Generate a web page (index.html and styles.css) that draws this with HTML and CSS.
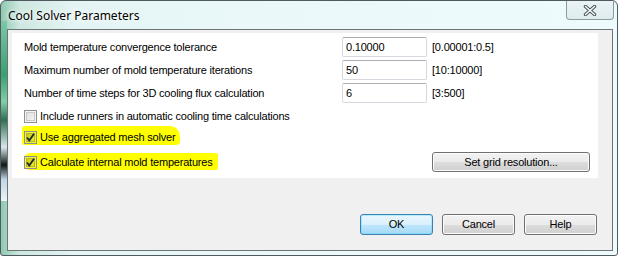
FILE: index.html
```html
<!DOCTYPE html>
<html>
<head>
<meta charset="utf-8">
<link rel="stylesheet" href="styles.css">
</head>
<body>
<div class="window">
  <div class="titlebar">
    <span class="title">Cool Solver Parameters</span>
    <div class="close">
      <svg width="14" height="11" viewBox="0 0 14 11">
        <path d="M2.5 1.5 L11.5 9.5 M11.5 1.5 L2.5 9.5" stroke="#4a5560" stroke-width="3.4" stroke-linecap="round" fill="none"/>
        <path d="M2.5 1.5 L11.5 9.5 M11.5 1.5 L2.5 9.5" stroke="#ffffff" stroke-width="1.4" stroke-linecap="round" fill="none"/>
      </svg>
    </div>
  </div>
  <div class="client">
    <div class="panel">
      <div class="params">
        <span class="lbl">Mold temperature convergence tolerance</span>
        <div class="field">0.10000</div>
        <span class="range">[0.00001:0.5]</span>
        <span class="lbl">Maximum number of mold temperature iterations</span>
        <div class="field">50</div>
        <span class="range">[10:10000]</span>
        <span class="lbl">Number of time steps for 3D cooling flux calculation</span>
        <div class="field">6</div>
        <span class="range">[3:500]</span>
      </div>
      <div class="check-row row1">
        <span class="box"></span>
        <span class="clabel">Include runners in automatic cooling time calculations</span>
      </div>
      <div class="check-row row2">
        <span class="hl hl2"></span>
        <span class="box checked">
          <svg width="11" height="11" viewBox="0 0 11 11"><path d="M2 5.5 L4.3 8.5 L9 1.8" stroke="#1e2a3a" stroke-width="1.9" fill="none"/></svg>
        </span>
        <span class="clabel">Use aggregated mesh solver</span>
      </div>
      <div class="check-row row3">
        <span class="hl hl3"></span>
        <span class="box checked">
          <svg width="11" height="11" viewBox="0 0 11 11"><path d="M2 5.5 L4.3 8.5 L9 1.8" stroke="#1e2a3a" stroke-width="1.9" fill="none"/></svg>
        </span>
        <span class="clabel">Calculate internal mold temperatures</span>
        <div class="btn grid-btn">Set grid resolution...</div>
      </div>
    </div>
    <div class="buttons">
      <div class="btn default">OK</div>
      <div class="btn">Cancel</div>
      <div class="btn">Help</div>
    </div>
  </div>
</div>
</body>
</html>
```

FILE: styles.css
```css
html, body {
  margin: 0;
  padding: 0;
  background: #ffffff;
}
body {
  width: 619px;
  height: 257px;
  overflow: hidden;
  font-family: "Liberation Sans", Arial, sans-serif;
  font-size: 11px;
  letter-spacing: -0.2px;
  color: #000;
}
.window {
  width: 616px;
  height: 254px;
  border: 1px solid #4f5a60;
  border-radius: 6px 6px 3px 3px;
  background: linear-gradient(to right, #8fc8b0 0, #cde8e0 3%, #e4f4f4 12%, #eaf8fa 40%, #eefbfc 100%);
  position: relative;
  overflow: hidden;
}
.window::before {
  content: "";
  position: absolute;
  left: 0;
  top: 20px;
  width: 6px;
  height: 180px;
  background: linear-gradient(to bottom, #7cc7a8 0, #3aa070 30%, #7fd0a8 45%, #2f6f50 55%, #d8e8ec 70%, #101818 80%, #c0d4e4 88%, #eaf6f8 100%);
}
.titlebar {
  height: 28px;
  display: flex;
  align-items: flex-start;
  justify-content: space-between;
}
.title {
  font-family: "Noto Sans", "Liberation Sans", sans-serif;
  font-size: 12px;
  letter-spacing: 0;
  line-height: 16px;
  margin: 7px 0 0 7px;
  color: #000;
  text-shadow: 0 0 6px #ffffff, 0 0 3px #ffffff;
}
.close {
  width: 46px;
  height: 18px;
  margin-right: 3px;
  border: 1px solid #8c9ba2;
  border-top: none;
  border-radius: 0 0 4px 4px;
  background: linear-gradient(to bottom, #e9f3f5, #dfecef);
  display: flex;
  align-items: center;
  justify-content: center;
}
.close svg { display: block; }
.client {
  margin-left: 6px;
  width: 604px;
  height: 220px;
  border: 1px solid #6d7376;
  background: #f0f0f0;
  display: flex;
  flex-direction: column;
}
.panel {
  margin: 3px 0 0 4px;
  width: 586px;
  height: 145px;
  background: #ffffff;
  box-sizing: border-box;
  padding: 4px 0 0 12px;
  display: flex;
  flex-direction: column;
}
.params {
  display: grid;
  grid-template-columns: 318px 85px auto;
  grid-auto-rows: 20px;
  row-gap: 3px;
  align-items: center;
}
.range { margin-left: 5px; }
.lbl, .range, .clabel {
  line-height: 13px;
  white-space: nowrap;
}
.field {
  height: 20px;
  box-sizing: border-box;
  border: 1px solid #d6d8df;
  border-top-color: #abadb3;
  border-radius: 2px;
  padding: 0 3px;
  line-height: 18px;
  background: #fff;
}
.check-row {
  display: flex;
  align-items: center;
  height: 20px;
  position: relative;
}
.row1 { margin-top: 3px; }
.row2 { margin-top: 1px; }
.row3 { margin-top: 5px; }
.box {
  width: 13px;
  height: 13px;
  box-sizing: border-box;
  border: 1px solid #8e8f8f;
  background: linear-gradient(135deg, #dcdcdc, #f8f8f8);
  box-shadow: inset 0 0 0 1px #f4f4f4, inset 0 0 0 2px #c8c8c8;
  margin-right: 3px;
  display: flex;
  align-items: center;
  justify-content: center;
  position: relative;
  z-index: 1;
}
.box.checked {
  background: linear-gradient(135deg, #c8c800, #f0f040);
  box-shadow: inset 0 0 0 1px #f0f040, inset 0 0 0 2px #b8b820;
}
.box svg { display: block; }
.clabel { position: relative; z-index: 1; }
.hl {
  position: absolute;
  background: #ffff00;
  z-index: 0;
}
.hl2 {
  left: -2px;
  top: -1px;
  width: 158px;
  height: 19px;
  border-radius: 3px 10px 4px 2px;
}
.hl3 {
  left: 0;
  top: 1px;
  width: 194px;
  height: 17px;
  border-radius: 6px 2px 2px 6px;
}
.btn {
  box-sizing: border-box;
  height: 21px;
  width: 73px;
  border: 1px solid #707070;
  border-radius: 3px;
  background: linear-gradient(to bottom, #f2f2f2 0, #ebebeb 50%, #dddddd 51%, #cfcfcf 100%);
  box-shadow: inset 0 0 0 1px #fcfcfc;
  display: flex;
  align-items: center;
  justify-content: center;
  line-height: 13px;
}
.grid-btn {
  width: 158px;
  height: 20px;
  margin-left: auto;
  margin-right: 8px;
  position: relative;
  z-index: 1;
}
.buttons {
  margin-top: auto;
  margin-bottom: 15px;
  margin-right: 15px;
  display: flex;
  justify-content: flex-end;
  gap: 9px;
}
.btn.default {
  border-color: #3c7fb1;
  background: linear-gradient(to bottom, #eaf6fd 0, #d9f0fc 50%, #bee6fd 51%, #a7d9f5 100%);
  box-shadow: inset 0 0 0 1px #48d8fb55;
}
```
